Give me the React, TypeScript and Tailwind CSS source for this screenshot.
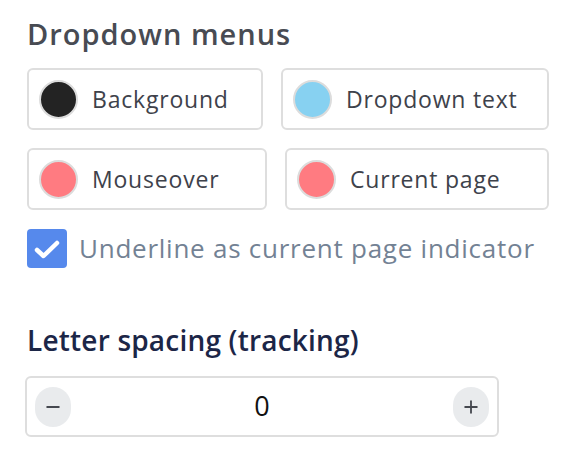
import { Minus, Plus } from 'lucide-react';

interface SwatchProps {
  label: string;
  color: string;
  width: string;
}

function Swatch({ label, color, width }: SwatchProps) {
  return (
    <div
      className={`flex h-[62px] items-center gap-[14px] rounded-md border-2 border-[#dedede] bg-white pl-[10px] ${width}`}
    >
      <span
        className="h-[39px] w-[39px] shrink-0 rounded-full border-2 border-[#dcdcdc]"
        style={{ backgroundColor: color }}
      />
      <span className="text-[23px] font-medium tracking-[0.8px] text-[#3e424b]">{label}</span>
    </div>
  );
}

export default function App() {
  return (
    <div
      className="h-[460px] w-[576px] overflow-hidden bg-white pl-[27px]"
      style={{ fontFamily: '"Open Sans", "Liberation Sans", sans-serif' }}
    >
      <h2 className="pt-[14px] text-[29px] leading-[40px] font-semibold tracking-[1px] text-[#484b53]">
        Dropdown menus
      </h2>

      <div className="mt-[14px] flex flex-col gap-[18px]">
        <div className="flex gap-[18px]">
          <Swatch label="Background" color="#232323" width="w-[236px]" />
          <Swatch label="Dropdown text" color="#87d1f1" width="w-[268px]" />
        </div>
        <div className="flex gap-[18px]">
          <Swatch label="Mouseover" color="#ff7b81" width="w-[240px]" />
          <Swatch label="Current page" color="#ff7b81" width="w-[264px]" />
        </div>
      </div>

      <label className="mt-[19px] flex items-center gap-3">
        <span className="flex h-[39px] w-[40px] items-center justify-center rounded-[4px] bg-[#5689ec]">
          <svg width="40" height="39" viewBox="0 0 40 39" fill="none">
            <polyline
              points="10,21 16.5,27 30,14"
              stroke="white"
              strokeWidth="4.5"
              strokeLinecap="round"
              strokeLinejoin="round"
            />
          </svg>
        </span>
        <span className="text-[26px] tracking-[0.75px] text-[#738294]">
          Underline as current page indicator
        </span>
      </label>

      <h2 className="mt-[52px] text-[28px] leading-[40px] font-semibold tracking-[0.2px] text-[#1c2647]">
        Letter spacing (tracking)
      </h2>

      <div className="mt-[16px] ml-[-2px] flex h-[61px] w-[474px] items-center justify-between rounded-md border-2 border-[#dedede] px-[8px]">
        <button
          type="button"
          className="flex h-[40px] w-[36px] items-center justify-center rounded-full bg-[#e9ebed] text-[#45484f]"
        >
          <Minus className="h-5 w-5" strokeWidth={2.2} />
        </button>
        <span className="text-[27px] text-[#111]">0</span>
        <button
          type="button"
          className="flex h-[40px] w-[36px] items-center justify-center rounded-full bg-[#e9ebed] text-[#45484f]"
        >
          <Plus className="h-5 w-5" strokeWidth={2.2} />
        </button>
      </div>
    </div>
  );
}
